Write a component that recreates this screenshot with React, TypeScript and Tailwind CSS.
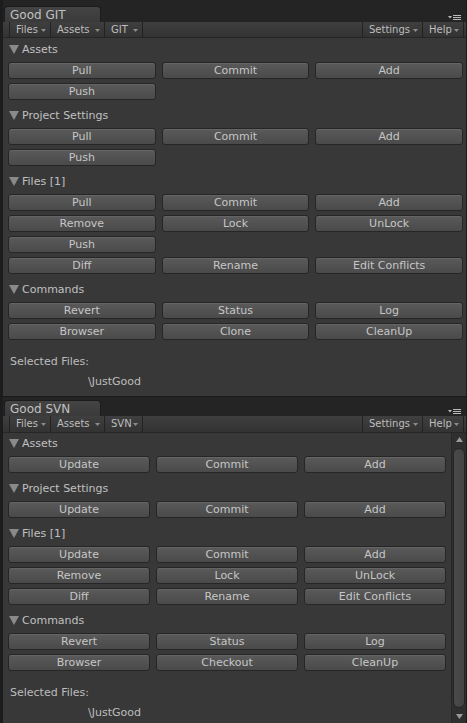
import React from "react";

type Row = (string | null)[];
type Section = { title: string; rows: Row[] };

const gitSections: Section[] = [
  { title: "Assets", rows: [["Pull", "Commit", "Add"], ["Push", null, null]] },
  { title: "Project Settings", rows: [["Pull", "Commit", "Add"], ["Push", null, null]] },
  {
    title: "Files [1]",
    rows: [
      ["Pull", "Commit", "Add"],
      ["Remove", "Lock", "UnLock"],
      ["Push", null, null],
      ["Diff", "Rename", "Edit Conflicts"],
    ],
  },
  { title: "Commands", rows: [["Revert", "Status", "Log"], ["Browser", "Clone", "CleanUp"]] },
];

const svnSections: Section[] = [
  { title: "Assets", rows: [["Update", "Commit", "Add"]] },
  { title: "Project Settings", rows: [["Update", "Commit", "Add"]] },
  {
    title: "Files [1]",
    rows: [
      ["Update", "Commit", "Add"],
      ["Remove", "Lock", "UnLock"],
      ["Diff", "Rename", "Edit Conflicts"],
    ],
  },
  { title: "Commands", rows: [["Revert", "Status", "Log"], ["Browser", "Checkout", "CleanUp"]] },
];

function Arrow() {
  return (
    <svg width="5" height="3" viewBox="0 0 5 3" className="ml-auto mr-[4px] mt-[1px] shrink-0">
      <path d="M0 0 H5 L2.5 3 Z" fill="#8c8c8c" />
    </svg>
  );
}

function Btn({ label }: { label: string | null }) {
  if (!label) return <div />;
  return (
    <div className="h-[17px] rounded-[3px] border border-[#262626] bg-linear-to-b from-[#5a5a5a] to-[#4a4a4a] shadow-[inset_0_1px_0_rgba(255,255,255,0.07)] text-[#c6c6c6] text-[11px] leading-none flex items-center justify-center">
      {label}
    </div>
  );
}

function Header({ title }: { title: string }) {
  return (
    <div className="h-[17px] mb-[4px] pl-[5px] flex items-center text-[11px] text-[#c0c0c0] leading-none">
      <svg width="10" height="9" viewBox="0 0 10 9" className="mr-[3px]">
        <path d="M0 0 H10 L5 9 Z" fill="#8a8a8a" />
      </svg>
      {title}
    </div>
  );
}

function Tab({ title }: { title: string }) {
  return (
    <div className="ml-[1px] w-[97px] h-[16px] rounded-t-[4px] border border-b-0 border-[#1c1c1c] bg-linear-to-b from-[#444] to-[#3a3a3a] text-[#c0c0c0] text-[12px] leading-none flex items-center pl-[5px]">
      {title}
    </div>
  );
}

function MenuIcon() {
  return (
    <svg width="13" height="7" viewBox="0 0 13 7" className="absolute right-[5px] bottom-[1px]">
      <path d="M0 2 H4 L2 4.5 Z" fill="#bbb" />
      <rect x="5" y="1" width="8" height="1" fill="#bbb" />
      <rect x="5" y="3" width="8" height="1" fill="#bbb" />
      <rect x="5" y="5" width="8" height="1" fill="#bbb" />
    </svg>
  );
}

function Toolbar({ vcs, h }: { vcs: string; h: string }) {
  const item = "h-full flex items-center pl-[6px] border-r border-[#222] text-[10px] text-[#bdbdbd] leading-none whitespace-nowrap";
  return (
    <div className={`${h} flex bg-linear-to-b from-[#3f3f3f] to-[#333] border-b border-[#262626]`}>
      <div className="w-[7px] border-r border-[#222]" />
      <div className={`${item} w-[41px]`}>Files<Arrow /></div>
      <div className={`${item} w-[54px]`}>Assets<Arrow /></div>
      <div className={`${item} w-[38px]`}>{vcs}<Arrow /></div>
      <div className="flex-1 border-r border-[#222]" />
      <div className={`${item} w-[60px]`}>Settings<Arrow /></div>
      <div className={`${item} w-[41px]`}>Help<Arrow /></div>
      <div className="w-[2px]" />
    </div>
  );
}

function Sections({ sections }: { sections: Section[] }) {
  return (
    <>
      {sections.map((s) => (
        <div key={s.title} className="mb-[7px]">
          <Header title={s.title} />
          <div className="flex flex-col gap-[4px] pl-[4px]">
            {s.rows.map((r, i) => (
              <div key={i} className="grid grid-cols-3 gap-x-[6px]">
                {r.map((b, j) => (
                  <Btn key={j} label={b} />
                ))}
              </div>
            ))}
          </div>
        </div>
      ))}
      <div className="mt-[14px] pl-[6px] text-[11px] text-[#bdbdbd] leading-[16px]">Selected Files:</div>
      <div className="mt-[4px] pl-[84px] text-[11px] text-[#bdbdbd] leading-[16px]">\JustGood</div>
    </>
  );
}

export default function App() {
  return (
    <div
      className="w-[467px] h-[723px] bg-[#1c1c1c] flex flex-col overflow-hidden"
      style={{ fontFamily: '"DejaVu Sans", Verdana, sans-serif' }}
    >
      {/* Good GIT */}
      <div className="h-[396px] flex flex-col pl-[3px] pr-[1px]">
        <div className="h-[22px] bg-[#242424] relative flex items-end">
          <Tab title="Good GIT" />
          <MenuIcon />
        </div>
        <Toolbar vcs="GIT" h="h-[16px]" />
        <div className="flex-1 bg-[#383838] pt-[3px] pl-[1px] pr-[3px]">
          <Sections sections={gitSections} />
        </div>
      </div>

      {/* Good SVN */}
      <div className="flex-1 flex flex-col pl-[3px] pr-[1px] border-t border-[#1a1a1a]">
        <div className="h-[19px] bg-[#242424] relative flex items-end">
          <Tab title="Good SVN" />
          <MenuIcon />
        </div>
        <Toolbar vcs="SVN" h="h-[17px]" />
        <div className="flex-1 bg-[#383838] flex">
          <div className="flex-1 pt-[2px] pl-[1px] pr-[5px]">
            <Sections sections={svnSections} />
          </div>
          <div className="w-[15px] bg-[#2f2f2f] border-l border-[#282828] flex flex-col items-center py-[4px]">
            <svg width="7" height="5" viewBox="0 0 7 5">
              <path d="M0 5 H7 L3.5 0 Z" fill="#9a9a9a" />
            </svg>
            <div className="flex-1 w-[12px] my-[6px] rounded-full border border-[#252525] bg-linear-to-r from-[#4a4a4a] to-[#444]" />
            <svg width="7" height="5" viewBox="0 0 7 5">
              <path d="M0 0 H7 L3.5 5 Z" fill="#9a9a9a" />
            </svg>
          </div>
        </div>
      </div>
    </div>
  );
}
